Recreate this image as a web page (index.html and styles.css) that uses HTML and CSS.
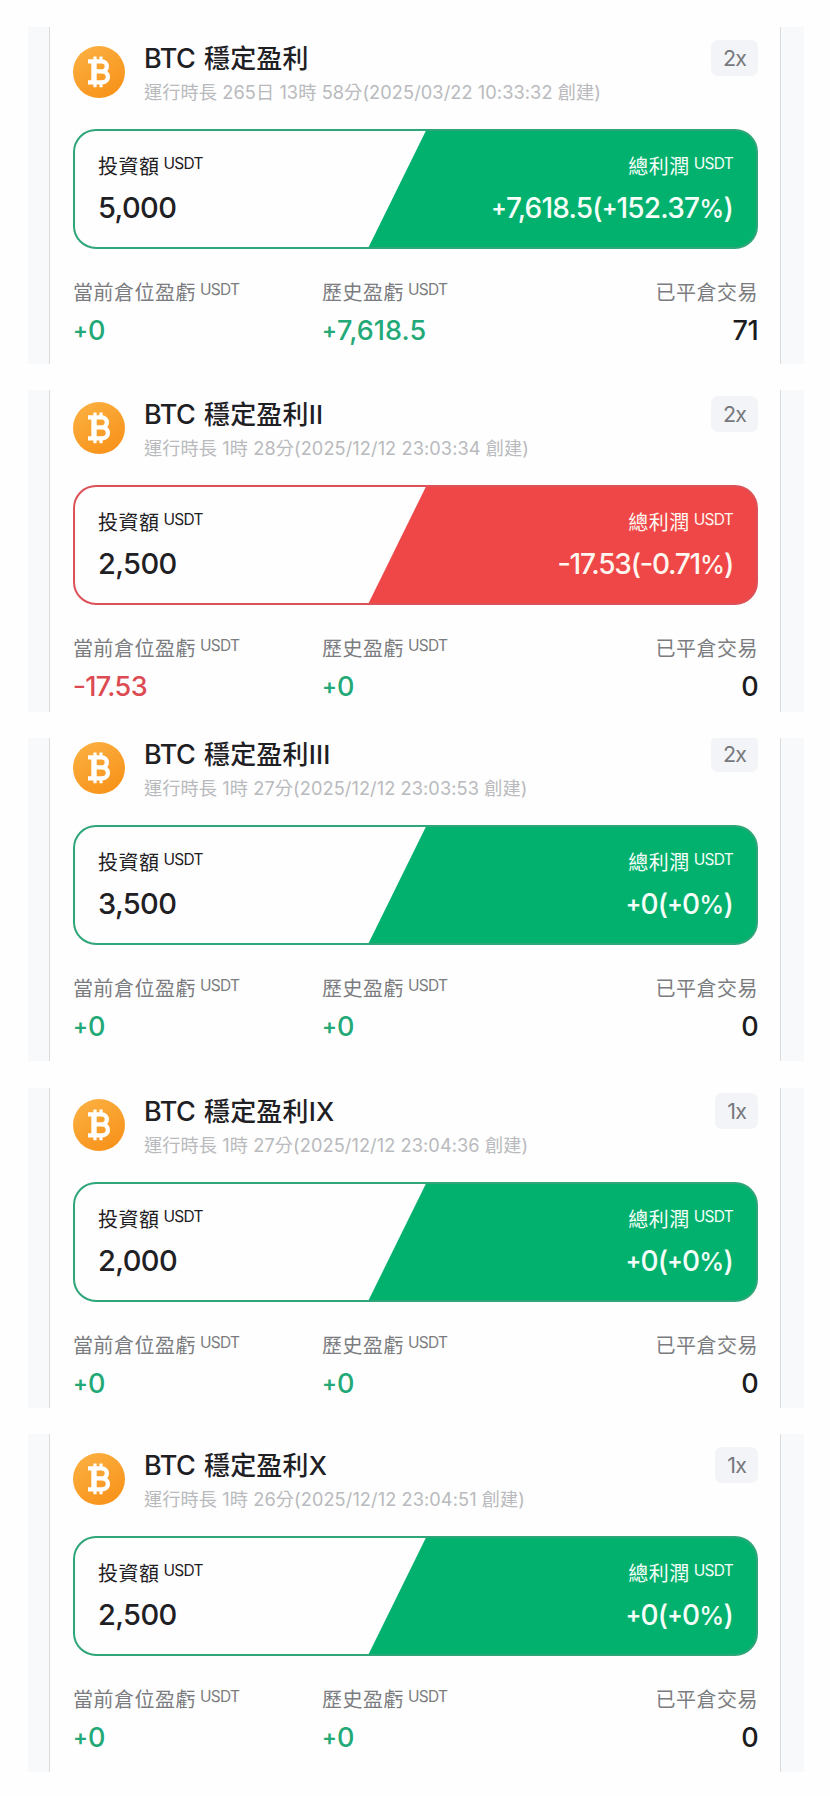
FILE: index.html
```
<!DOCTYPE html>
<html lang="zh-Hant">
<head>
<meta charset="utf-8">
<title>BTC 穩定盈利</title>
<link rel="stylesheet" href="styles.css">
</head>
<body>
<svg width="0" height="0" class="defs">
  <defs>
    <linearGradient id="coin-fill" x1="0" y1="0" x2="0.6" y2="1">
      <stop offset="0" stop-color="#fbb244"/>
      <stop offset="1" stop-color="#f8941c"/>
    </linearGradient>
    <symbol id="coin" viewBox="0 0 52 52">
      <circle cx="26" cy="26" r="26" fill="url(#coin-fill)"/>
      <g fill="none" stroke="#fff" stroke-width="4.4">
        <path d="M15 15.4H28.5C35.6 15.4 35.6 25.4 28.5 25.4H21M28.5 25.4C37 25.4 37 36.4 28.5 36.4H15"/>
        <path d="M21 15V36.8" stroke-width="5.4"/>
        <path d="M22 10.5V15M28 10.5V15M22 36.8V41.3M28 36.8V41.3" stroke-width="3.2"/>
      </g>
    </symbol>
  </defs>
</svg>
<main class="list">
  <section class="strip strip-1"><div class="card">
    <header class="head">
      <svg class="coin"><use href="#coin"/></svg>
      <div class="info"><h2 class="title"><span class="sym">BTC</span> 穩定盈利</h2><p class="sub">運行時長 265日 13時 58分(2025/03/22 10:33:32 創建)</p></div>
      <span class="badge">2x</span>
    </header>
    <div class="banner">
      <div class="cell"><div class="label">投資額<span class="unit">USDT</span></div><div class="amount">5,000</div></div>
      <div class="cell right"><div class="label">總利潤<span class="unit">USDT</span></div><div class="amount profit"><span class="plus">+</span>7,618.5(<span class="plus">+</span>152.37<span class="pct">%</span>)</div></div>
    </div>
    <div class="stats">
      <div><div class="label">當前倉位盈虧<span class="unit">USDT</span></div><div class="value up"><span class="plus">+</span>0</div></div>
      <div><div class="label">歷史盈虧<span class="unit">USDT</span></div><div class="value up"><span class="plus">+</span>7,618.5</div></div>
      <div class="right"><div class="label">已平倉交易</div><div class="value">71</div></div>
    </div>
  </div></section>

  <section class="strip strip-2"><div class="card">
    <header class="head">
      <svg class="coin"><use href="#coin"/></svg>
      <div class="info"><h2 class="title"><span class="sym">BTC</span> 穩定盈利<span class="num">II</span></h2><p class="sub">運行時長 1時 28分(2025/12/12 23:03:34 創建)</p></div>
      <span class="badge">2x</span>
    </header>
    <div class="banner loss">
      <div class="cell"><div class="label">投資額<span class="unit">USDT</span></div><div class="amount">2,500</div></div>
      <div class="cell right"><div class="label">總利潤<span class="unit">USDT</span></div><div class="amount profit"><span class="minus">−</span>17.53(<span class="minus">−</span>0.71<span class="pct">%</span>)</div></div>
    </div>
    <div class="stats">
      <div><div class="label">當前倉位盈虧<span class="unit">USDT</span></div><div class="value down"><span class="minus">−</span>17.53</div></div>
      <div><div class="label">歷史盈虧<span class="unit">USDT</span></div><div class="value up"><span class="plus">+</span>0</div></div>
      <div class="right"><div class="label">已平倉交易</div><div class="value">0</div></div>
    </div>
  </div></section>

  <section class="strip strip-3"><div class="card">
    <header class="head">
      <svg class="coin"><use href="#coin"/></svg>
      <div class="info"><h2 class="title"><span class="sym">BTC</span> 穩定盈利<span class="num">III</span></h2><p class="sub">運行時長 1時 27分(2025/12/12 23:03:53 創建)</p></div>
      <span class="badge">2x</span>
    </header>
    <div class="banner">
      <div class="cell"><div class="label">投資額<span class="unit">USDT</span></div><div class="amount">3,500</div></div>
      <div class="cell right"><div class="label">總利潤<span class="unit">USDT</span></div><div class="amount profit"><span class="plus">+</span>0(<span class="plus">+</span>0<span class="pct">%</span>)</div></div>
    </div>
    <div class="stats">
      <div><div class="label">當前倉位盈虧<span class="unit">USDT</span></div><div class="value up"><span class="plus">+</span>0</div></div>
      <div><div class="label">歷史盈虧<span class="unit">USDT</span></div><div class="value up"><span class="plus">+</span>0</div></div>
      <div class="right"><div class="label">已平倉交易</div><div class="value">0</div></div>
    </div>
  </div></section>

  <section class="strip strip-4"><div class="card">
    <header class="head">
      <svg class="coin"><use href="#coin"/></svg>
      <div class="info"><h2 class="title"><span class="sym">BTC</span> 穩定盈利<span class="num">IX</span></h2><p class="sub">運行時長 1時 27分(2025/12/12 23:04:36 創建)</p></div>
      <span class="badge">1x</span>
    </header>
    <div class="banner">
      <div class="cell"><div class="label">投資額<span class="unit">USDT</span></div><div class="amount">2,000</div></div>
      <div class="cell right"><div class="label">總利潤<span class="unit">USDT</span></div><div class="amount profit"><span class="plus">+</span>0(<span class="plus">+</span>0<span class="pct">%</span>)</div></div>
    </div>
    <div class="stats">
      <div><div class="label">當前倉位盈虧<span class="unit">USDT</span></div><div class="value up"><span class="plus">+</span>0</div></div>
      <div><div class="label">歷史盈虧<span class="unit">USDT</span></div><div class="value up"><span class="plus">+</span>0</div></div>
      <div class="right"><div class="label">已平倉交易</div><div class="value">0</div></div>
    </div>
  </div></section>

  <section class="strip strip-5"><div class="card">
    <header class="head">
      <svg class="coin"><use href="#coin"/></svg>
      <div class="info"><h2 class="title"><span class="sym">BTC</span> 穩定盈利<span class="num">X</span></h2><p class="sub">運行時長 1時 26分(2025/12/12 23:04:51 創建)</p></div>
      <span class="badge">1x</span>
    </header>
    <div class="banner">
      <div class="cell"><div class="label">投資額<span class="unit">USDT</span></div><div class="amount">2,500</div></div>
      <div class="cell right"><div class="label">總利潤<span class="unit">USDT</span></div><div class="amount profit"><span class="plus">+</span>0(<span class="plus">+</span>0<span class="pct">%</span>)</div></div>
    </div>
    <div class="stats">
      <div><div class="label">當前倉位盈虧<span class="unit">USDT</span></div><div class="value up"><span class="plus">+</span>0</div></div>
      <div><div class="label">歷史盈虧<span class="unit">USDT</span></div><div class="value up"><span class="plus">+</span>0</div></div>
      <div class="right"><div class="label">已平倉交易</div><div class="value">0</div></div>
    </div>
  </div></section>
</main>
</body>
</html>
```

FILE: styles.css
```
* { box-sizing: border-box; margin: 0; padding: 0; }
body {
  background: #fefefe;
  color: #1f2024;
  font-family: Inter, "Noto Sans CJK TC", sans-serif;
}
.defs { display: block; }
.list {
  display: flex;
  flex-direction: column;
  gap: 26px;
  padding: 27px 26px 24px 28px;
}
.strip {
  padding: 0 23px 0 21px;
  background: #f7f9fb;
  overflow: hidden;
}
.card {
  height: 100%;
  padding: 0 22px 0 23px;
  background: #fefefe;
  border-left: 1px solid #d9dcdf;
  border-right: 1px solid #d9dcdf;
  overflow: hidden;
}
.strip-1 { height: 337px; }
.strip-2 { height: 322px; }
.strip-3 { height: 323px; }
.strip-4 { height: 320px; margin-top: 1px; }
.strip-5 { height: 338px; }
.strip-1 .head, .strip-5 .head { margin-top: 13px; }
.strip-2 .head { margin-top: 6px; }
.strip-3 .head { margin-top: -2px; }
.strip-4 .head { margin-top: 5px; }

.head {
  display: flex;
  align-items: flex-start;
  height: 89px;
}
.coin { width: 52px; height: 52px; margin-top: 6px; flex: none; }
.info { flex: 1; margin-left: 19px; padding-top: 3px; white-space: nowrap; }
.title { font-size: 26px; line-height: 32px; font-weight: 500; letter-spacing: 0.2px; word-spacing: 1.5px; }
.sym { letter-spacing: -0.5px; font-size: 27px; }
.sub { margin-top: 5px; font-size: 18.2px; line-height: 24px; letter-spacing: 0.08px; color: #b9babd; }
.badge {
  padding: 0 12px;
  height: 36px;
  border-radius: 7px;
  background: #f3f4f8;
  color: #77787d;
  font-size: 21.5px;
  line-height: 36px;
  letter-spacing: -0.9px;
}
.banner {
  display: flex;
  justify-content: space-between;
  height: 120px;
  padding: 22px 23px 0;
  border: 2px solid #2fa679;
  border-radius: 23px;
  background: linear-gradient(116.2deg, transparent 316.9px, #03b16e 317.9px) border-box;
}
.banner.loss {
  border-color: #dc5258;
  background: linear-gradient(116.2deg, transparent 316.9px, #ef4747 317.9px) border-box;
}
.label { display: flex; font-size: 20px; line-height: 28px; letter-spacing: 0.5px; }
.unit { margin-left: 4px; font-size: 15.5px; line-height: 22px; letter-spacing: -0.75px; }
.amount { margin-top: 9px; font-size: 29px; line-height: 36px; font-weight: 500; letter-spacing: -0.6px; }
.profit { font-size: 28px; letter-spacing: -0.8px; }
.loss .profit { letter-spacing: -1.2px; }
.plus, .minus, .pct { line-height: 0; }
.plus { font-size: 0.82em; font-weight: 600; vertical-align: 0.07em; }
.minus { font-size: 0.7em; font-weight: 700; vertical-align: 0.2em; }
.pct { font-size: 0.9em; }
.right { text-align: right; }
.right .label { justify-content: flex-end; }
.banner .right { color: #f4fff9; }
.banner.loss .right { color: #fff6f0; }
.stats {
  display: grid;
  grid-template-columns: 249px 1fr auto;
  padding-top: 30px;
  color: #1b1c20;
}
.stats .label { color: #7b7c80; }
.value { margin-top: 7px; font-size: 27px; line-height: 34px; font-weight: 500; letter-spacing: -0.6px; }
.up { color: #23a977; letter-spacing: 0.1px; }
.down { color: #dc4a52; }
```
